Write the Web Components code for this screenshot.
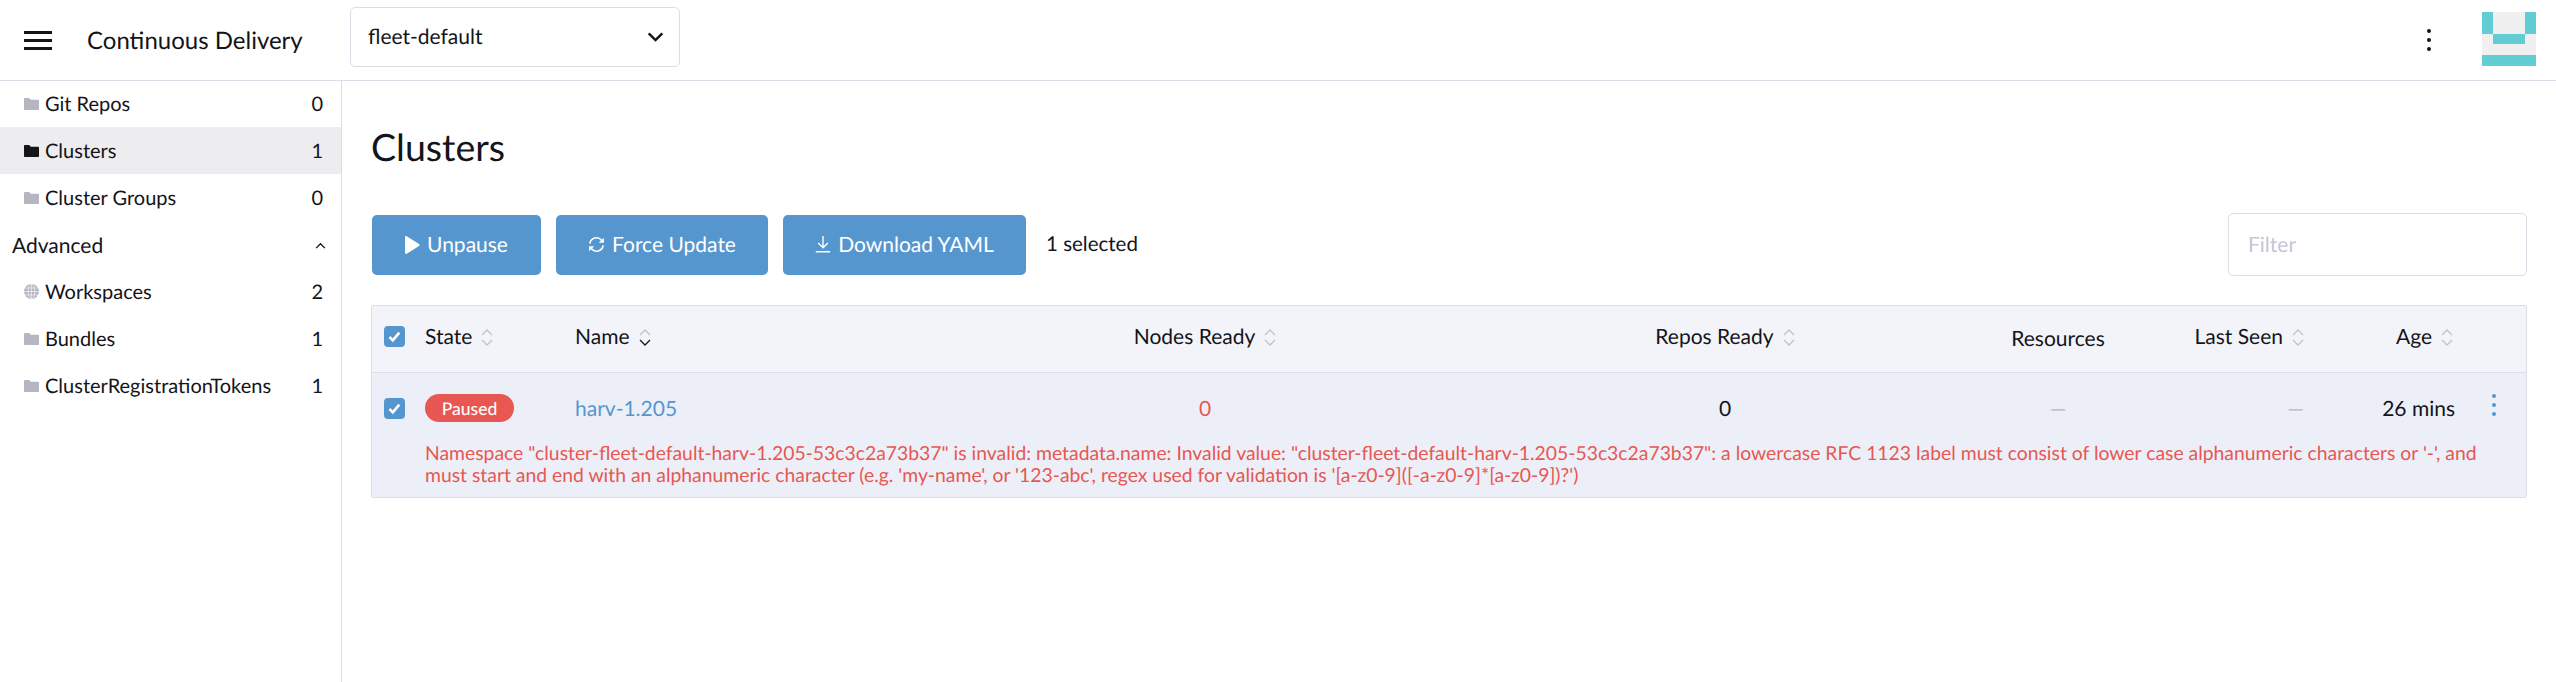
<!DOCTYPE html>
<html>
<head>
<meta charset="utf-8">
<title>Clusters</title>
<style>
  html, body { margin: 0; height: 100%; background: #fff; }
  body { font-family: Lato, "Open Sans", sans-serif; color: #141419; text-rendering: geometricPrecision; }
</style>
</head>
<body>
<fleet-app></fleet-app>
<script>
const ICONS = {
  folder: `<svg viewBox="0 0 16 14" width="15" height="12" preserveAspectRatio="none"><path fill="currentColor" d="M0 1.200C0 .5.5 0 1.200 0h4.200l2 2h7.400c.7 0 1.200.5 1.200 1.200v9.600c0 .7-.5 1.200-1.200 1.200H1.200C.5 14 0 13.500 0 12.800z"/></svg>`,
  globe: `<svg viewBox="0 0 16 16" width="15" height="15"><circle cx="8" cy="8" r="8" fill="currentColor"/><g fill="none" stroke="#fff" stroke-width=".6"><ellipse cx="8" cy="8" rx="3.500" ry="8"/><path d="M0 8h16M1 4.300h14M1 11.700h14M8 0v16"/></g></svg>`,
  play: `<svg viewBox="0 0 15 18" width="15" height="18"><path fill="currentColor" d="M0 1.200C0 .2.900-.3 1.700.2l12.400 7.700c.7.5.7 1.600 0 2.100L1.700 17.800C.9 18.300 0 17.800 0 16.800z"/></svg>`,
  refresh: `<svg viewBox="0 0 18 18" width="17" height="17" fill="none" stroke="currentColor" stroke-width="1.700"><path d="M2 8a7 7 0 0 1 12.300-3.600L16 6.300"/><path d="M16 10a7 7 0 0 1-12.300 3.600L2 11.700"/><path fill="currentColor" stroke="none" d="M16.800 1.800v5.400h-5.400zM1.200 16.200v-5.400h5.400z"/></svg>`,
  download: `<svg viewBox="0 0 16 17" width="16" height="17" fill="none" stroke="currentColor" stroke-width="1.400"><path d="M8 0v11.500M3.200 7l4.800 4.800L12.800 7M.8 15.800h14.400"/></svg>`
};

class IconGlyph extends HTMLElement {
  connectedCallback() {
    this.attachShadow({ mode: 'open' }).innerHTML = `<style>
      :host { display: inline-flex; align-items: center; justify-content: flex-start; }
      svg { display: block; }
    </style>${ICONS[this.getAttribute('name')]}`;
  }
}

class CheckBox extends HTMLElement {
  constructor() {
    super();
    this.attachShadow({ mode: 'open' }).innerHTML = `<style>
      :host { display: block; width: 21px; height: 21px; }
      svg { display: block; }
    </style>
    <svg viewBox="0 0 21 21" width="21" height="21">
      <rect width="21" height="21" rx="4" fill="#5696ce"/>
      <path d="M5.500 11l3.300 3.300 6.500-7.600" fill="none" stroke="#fff" stroke-width="2.600"/>
    </svg>`;
  }
}

class SortHead extends HTMLElement {
  constructor() {
    super();
    const active = this.hasAttribute('active');
    this.attachShadow({ mode: 'open' }).innerHTML = `<style>
      :host { display: inline-flex; align-items: center; gap: 9px; font-size: 21px; }
      svg { display: block; flex: none; margin-top: 2px; }
    </style>
    <slot></slot>
    <svg viewBox="0 0 12 17" width="12" height="17" fill="none" stroke-width="1.300">
      <path d="M1 6l5-5 5 5" stroke="#c0c1ca"/>
      <path d="M1 11l5 5 5-5" stroke="${active ? '#141419' : '#c0c1ca'}"/>
    </svg>`;
  }
}

class AppHeader extends HTMLElement {
  constructor() {
    super();
    this.attachShadow({ mode: 'open' }).innerHTML = `<style>
      :host { display: flex; align-items: center; height: 81px; box-sizing: border-box; border-bottom: 1px solid #dcdee7; padding: 0 20px 0 24px; background: #fff; }
      .burger { width: 28px; display: flex; flex-direction: column; gap: 5px; margin-right: 35px; }
      .burger i { display: block; height: 3px; background: #141419; }
      .title { width: 263px; font-size: 24px; white-space: nowrap; }
      .select { width: 330px; height: 60px; box-sizing: border-box; border: 1px solid #dcdee7; border-radius: 5px; display: flex; align-items: center; justify-content: space-between; padding: 0 15px 0 17px; font-size: 21px; margin-bottom: 6px; }
      .select span { padding-bottom: 2px; }
      .dots { margin-left: auto; margin-right: 51px; display: flex; flex-direction: column; gap: 5px; margin-bottom: 1px; }
      .dots i { display: block; width: 4px; height: 4px; border-radius: 50%; background: #141419; }
      .logo { width: 54px; height: 54px; display: grid; grid-template-columns: repeat(5, 1fr); grid-template-rows: repeat(5, 1fr); background: #f0f0f0; margin-bottom: 2px; }
      .logo i { background: #63cdd6; }
    </style>
    <div class="burger"><i></i><i></i><i></i></div>
    <div class="title">Continuous Delivery</div>
    <div class="select">
      <span>fleet-default</span>
      <svg viewBox="0 0 18 11" width="17" height="10" fill="none" stroke="#141419" stroke-width="2.600"><path d="M1.500 1.500L9 9l7.500-7.500"/></svg>
    </div>
    <div class="dots"><i></i><i></i><i></i></div>
    <div class="logo">
      <i style="grid-area:1/1/3/2"></i><i style="grid-area:1/5/3/6"></i>
      <i style="grid-area:3/2/4/5"></i><i style="grid-area:5/1/6/6"></i>
    </div>`;
  }
}

class NavItem extends HTMLElement {
  constructor() {
    super();
    const icon = this.getAttribute('icon') || 'folder';
    this.attachShadow({ mode: 'open' }).innerHTML = `<style>
      :host { display: flex; align-items: center; height: 47px; padding: 0 18px 0 24px; font-size: 20px; color: #141419; }
      :host([active]) { background: #ededf0; }
      icon-glyph { width: 16px; margin-right: 5px; color: #b6b6c2; }
      :host([active]) icon-glyph { color: #141419; }
      .label { flex: 1; white-space: nowrap; }
    </style>
    <icon-glyph name="${icon}"></icon-glyph>
    <span class="label"><slot></slot></span>
    <span>${this.getAttribute('count')}</span>`;
  }
}

class SideNav extends HTMLElement {
  constructor() {
    super();
    this.attachShadow({ mode: 'open' }).innerHTML = `<style>
      :host { display: block; width: 342px; flex: none; box-sizing: border-box; border-right: 1px solid #dcdee7; }
      .list { margin-top: -1px; }
      .group { display: flex; align-items: center; justify-content: space-between; height: 47px; box-sizing: border-box; padding: 2px 15px 0 12px; font-size: 21px; }
    </style>
    <div class="list">
      <nav-item count="0">Git Repos</nav-item>
      <nav-item count="1" active>Clusters</nav-item>
      <nav-item count="0">Cluster Groups</nav-item>
      <div class="group">
        <span>Advanced</span>
        <svg viewBox="0 0 12 8" width="11" height="7" fill="none" stroke="#141419" stroke-width="1.500"><path d="M1 7l5-5 5 5"/></svg>
      </div>
      <nav-item count="2" icon="globe">Workspaces</nav-item>
      <nav-item count="1">Bundles</nav-item>
      <nav-item count="1">ClusterRegistrationTokens</nav-item>
    </div>`;
  }
}

class ActionButton extends HTMLElement {
  constructor() {
    super();
    this.attachShadow({ mode: 'open' }).innerHTML = `<style>
      :host { display: inline-flex; align-items: center; justify-content: center; gap: 7px; height: 60px; box-sizing: border-box; background: #5696ce; color: #fff; border-radius: 5px; font-size: 21px; white-space: nowrap; }
    </style>
    <icon-glyph name="${this.getAttribute('icon')}"></icon-glyph>
    <slot></slot>`;
  }
}

class StateBadge extends HTMLElement {
  constructor() {
    super();
    this.attachShadow({ mode: 'open' }).innerHTML = `<style>
      :host { display: inline-flex; align-items: center; justify-content: center; width: 89px; height: 28px; border-radius: 14px; background: #e85751; color: #fff; font-size: 17.500px; font-weight: 500; }
    </style><slot></slot>`;
  }
}

class ClusterTable extends HTMLElement {
  constructor() {
    super();
    this.attachShadow({ mode: 'open' }).innerHTML = `<style>
      :host { display: block; border: 1px solid #dcdee7; border-radius: 2px; --cols: 53px 150px 385px 490px 550px 116px 224px 130px 1fr; }
      .row { display: grid; grid-template-columns: var(--cols); align-items: center; }
      .head { height: 67px; box-sizing: border-box; background: #f3f4f9; border-bottom: 1px solid #dcdee7; font-size: 21px; padding-bottom: 6px; }
      .body { background: #eceff7; font-size: 21px; }
      .cells { height: 70px; }
      .tick { padding-left: 12px; }
      .center { text-align: center; }
      .seen { text-align: right; padding-right: 36px; }
      .age { text-align: right; padding-right: 17px; }
      .age-value { text-align: right; padding-right: 15px; }
      .res { padding-top: 5px; }
      .link { color: #5696ce; }
      .fail { color: #e85751; }
      .dash { color: #b6b6c2; }
      .menu { display: flex; flex-direction: column; align-items: center; gap: 5px; padding-right: 8px; margin-top: -7px; }
      .menu i { width: 4px; height: 4px; border-radius: 50%; background: #5696ce; }
      .error { padding: 0 40px 10px 53px; color: #e85751; font-size: 19.350px; line-height: 22px; }
    </style>
    <div class="row head">
      <div class="tick"><check-box></check-box></div>
      <div><sort-head>State</sort-head></div>
      <div><sort-head active>Name</sort-head></div>
      <div class="center"><sort-head>Nodes Ready</sort-head></div>
      <div class="center"><sort-head>Repos Ready</sort-head></div>
      <div class="center res">Resources</div>
      <div class="seen"><sort-head>Last Seen</sort-head></div>
      <div class="age"><sort-head>Age</sort-head></div>
      <div></div>
    </div>
    <div class="body">
      <div class="row cells">
        <div class="tick"><check-box></check-box></div>
        <div><state-badge>Paused</state-badge></div>
        <div class="link">harv-1.205</div>
        <div class="center fail">0</div>
        <div class="center">0</div>
        <div class="center dash">—</div>
        <div class="seen dash">—</div>
        <div class="age-value">26 mins</div>
        <div class="menu"><i></i><i></i><i></i></div>
      </div>
      <div class="error">Namespace "cluster-fleet-default-harv-1.205-53c3c2a73b37" is invalid: metadata.name: Invalid value: "cluster-fleet-default-harv-1.205-53c3c2a73b37": a lowercase RFC 1123 label must consist of lower case alphanumeric characters or '-', and must start and end with an alphanumeric character (e.g. 'my-name', or '123-abc', regex used for validation is '[a-z0-9]([-a-z0-9]*[a-z0-9])?')</div>
    </div>`;
  }
}

class ClustersPage extends HTMLElement {
  constructor() {
    super();
    this.attachShadow({ mode: 'open' }).innerHTML = `<style>
      :host { display: block; flex: 1; min-width: 0; padding: 0 29px 0 29px; }
      h1 { margin: 0; font-size: 37.500px; font-weight: 400; line-height: 44px; padding-top: 44px; }
      .bar { display: flex; align-items: center; margin-top: 44px; padding-left: 1px; }
      action-button { margin-right: 15px; }
      .selected { margin-left: 5px; font-size: 20.500px; padding-bottom: 2px; }
      .filter { margin-left: auto; width: 299px; height: 63px; box-sizing: border-box; border: 1px solid #dcdee7; border-radius: 5px; display: flex; align-items: center; padding: 0 19px; font-size: 21px; color: #c5c6d6; }
      cluster-table { margin-top: 29px; }
    </style>
    <h1>Clusters</h1>
    <div class="bar">
      <action-button icon="play" style="width:169px">Unpause</action-button>
      <action-button icon="refresh" style="width:212px">Force Update</action-button>
      <action-button icon="download" style="width:243px">Download YAML</action-button>
      <span class="selected">1 selected</span>
      <span class="filter">Filter</span>
    </div>
    <cluster-table></cluster-table>`;
  }
}

class FleetApp extends HTMLElement {
  constructor() {
    super();
    this.attachShadow({ mode: 'open' }).innerHTML = `<style>
      :host { display: flex; flex-direction: column; height: 100vh; }
      .main { flex: 1; display: flex; min-height: 0; }
    </style>
    <app-header></app-header>
    <div class="main">
      <side-nav></side-nav>
      <clusters-page></clusters-page>
    </div>`;
  }
}

customElements.define('icon-glyph', IconGlyph);
customElements.define('check-box', CheckBox);
customElements.define('sort-head', SortHead);
customElements.define('app-header', AppHeader);
customElements.define('nav-item', NavItem);
customElements.define('side-nav', SideNav);
customElements.define('action-button', ActionButton);
customElements.define('state-badge', StateBadge);
customElements.define('cluster-table', ClusterTable);
customElements.define('clusters-page', ClustersPage);
customElements.define('fleet-app', FleetApp);
</script>
</body>
</html>
